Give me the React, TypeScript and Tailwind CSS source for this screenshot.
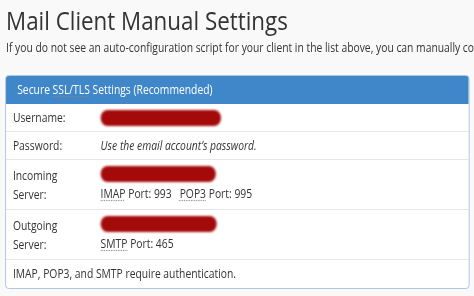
import React from "react";

function Blob({ w }: { w: number }) {
  return (
    <div
      className="h-[16px] rounded-full bg-[#a50a0a] blur-[1px]"
      style={{ width: w }}
    />
  );
}

function Abbr({ children }: { children: React.ReactNode }) {
  return (
    <span className="underline decoration-dotted decoration-[#888] underline-offset-2">
      {children}
    </span>
  );
}

export default function App() {
  return (
    <div className="w-[474px] h-[296px] overflow-hidden bg-[#f9f9f9]">
      <div
        className="w-[551px] origin-top-left scale-x-[0.86] text-[#333]"
        style={{ fontFamily: '"Open Sans", "Noto Sans", sans-serif' }}
      >
        <div className="pl-[7px] pt-[4px]">
          <h1 className="text-[26px] leading-[32px] text-[#333] whitespace-nowrap">
            Mail Client Manual Settings
          </h1>
          <p className="mt-[4px] text-[12px] leading-[16px] whitespace-nowrap">
            If you do not see an auto-configuration script for your client in the list above, you can manually configure your mail client.
          </p>
        </div>
        <div className="ml-[6px] mt-[19px] w-[540px] rounded-[4px] border border-[#a8c4e0] bg-white overflow-hidden">
          <div className="h-[28px] bg-[#3f87c8] px-[13px] flex items-center text-white text-[12px]">
            <span>
              Secure <Abbr>SSL/TLS</Abbr> Settings (Recommended)
            </span>
          </div>
          <div className="flex h-[28px] items-center border-b border-[#e6e6e6] text-[12px]">
            <div className="w-[110px] pl-[8px]">Username:</div>
            <Blob w={140} />
          </div>
          <div className="flex h-[28px] items-center border-b border-[#e6e6e6] text-[12px]">
            <div className="w-[110px] pl-[8px]">Password:</div>
            <div className="italic">Use the email account’s password.</div>
          </div>
          <div className="flex h-[50px] items-center border-b border-[#e6e6e6] text-[12px] leading-[19px]">
            <div className="w-[110px] pl-[8px]">
              Incoming
              <br />
              Server:
            </div>
            <div className="flex flex-col gap-[2px]">
              <Blob w={134} />
              <div>
                <Abbr>IMAP</Abbr> Port: 993 &nbsp;&nbsp;<Abbr>POP3</Abbr> Port: 995
              </div>
            </div>
          </div>
          <div className="flex h-[50px] items-center border-b border-[#e6e6e6] text-[12px] leading-[19px]">
            <div className="w-[110px] pl-[8px]">
              Outgoing
              <br />
              Server:
            </div>
            <div className="flex flex-col gap-[2px]">
              <Blob w={135} />
              <div>
                <Abbr>SMTP</Abbr> Port: 465
              </div>
            </div>
          </div>
          <div className="flex h-[28px] items-center pl-[8px] text-[12px]">
            IMAP, POP3, and SMTP require authentication.
          </div>
        </div>
      </div>
    </div>
  );
}
